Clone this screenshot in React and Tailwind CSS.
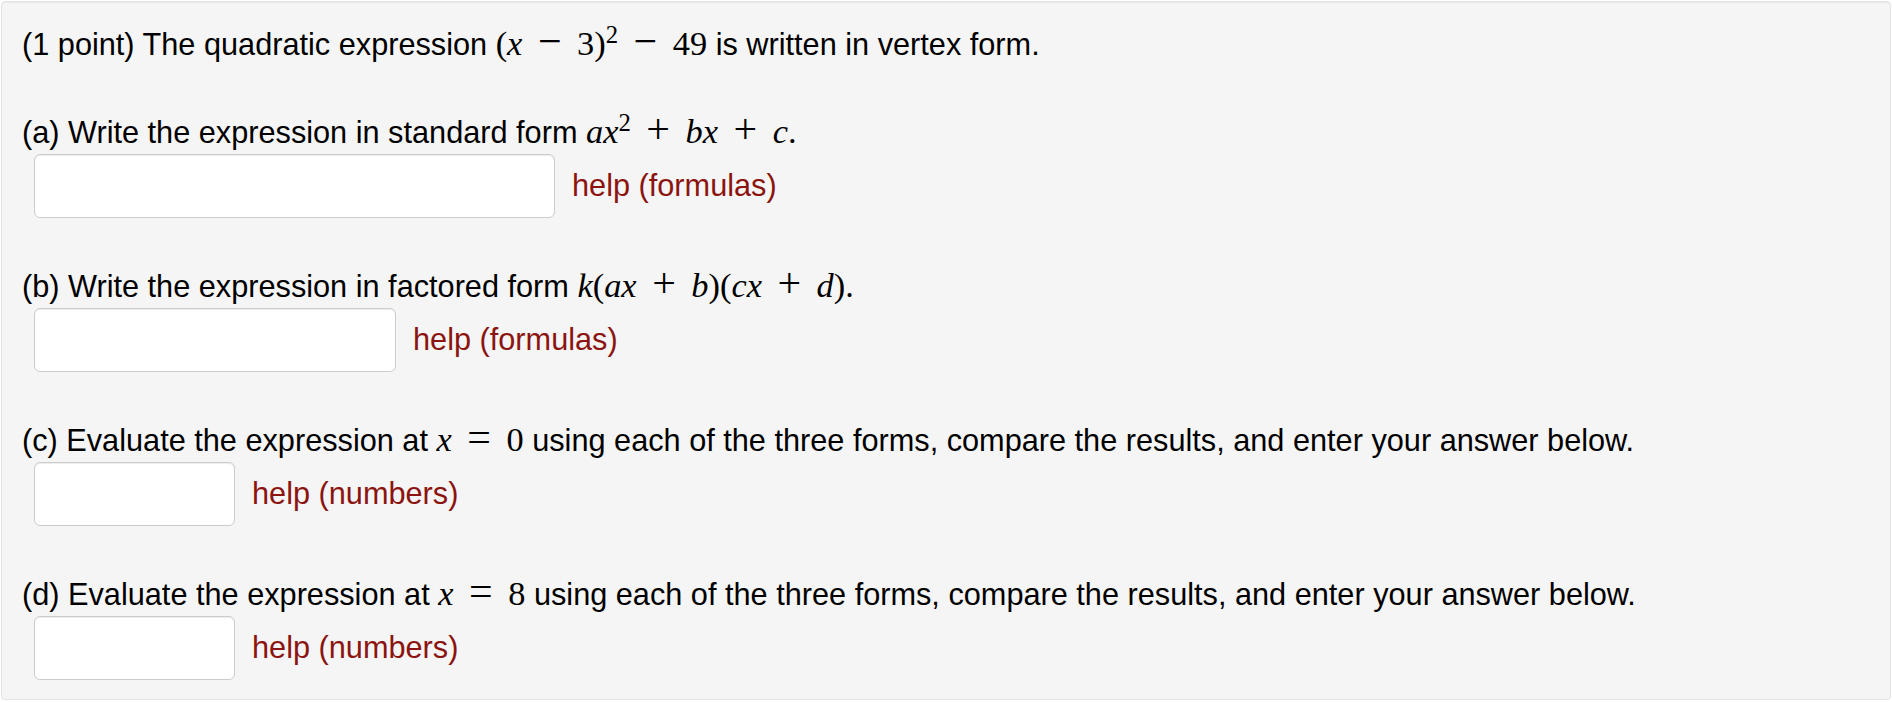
const textFont = { fontFamily: '"Liberation Sans", Arial, Helvetica, sans-serif' };

const M = ({ children }) => (
  <span className="font-['Liberation_Serif',serif] text-[1.12em] leading-[0]">{children}</span>
);
const V = ({ children }) => <i className="italic">{children}</i>;
const Op = ({ children }) => (
  <span className="mx-[0.37em] text-[1.22em] leading-[0]">{children}</span>
);
const Sup = ({ children }) => (
  <span className="relative -top-[0.5em] text-[0.72em] leading-[0]">{children}</span>
);

const Answer = ({ width, help }) => (
  <div className="flex items-center gap-[17px] pl-[12px]">
    <input
      type="text"
      className="h-[64px] rounded-[6px] border border-[#cccccc] bg-white shadow-[inset_0_1px_1px_rgba(0,0,0,0.075)] outline-none"
      style={{ width }}
    />
    <a className="text-[#8b1410] cursor-pointer">{help}</a>
  </div>
);

export default function App() {
  return (
    <div className="min-h-screen bg-white p-[1px]">
      <div
        className="rounded-[4px] border border-[#e3e3e3] bg-[#f5f5f5] px-[20px] pt-[22px] pb-[19px] text-[30.7px] leading-[42px] text-black shadow-[inset_0_1px_1px_rgba(0,0,0,0.05)]"
        style={textFont}
      >
        <p>
          (1 point) The quadratic expression{' '}
          <M>
            (<V>x</V>
            <Op>−</Op>3)<Sup>2</Sup>
            <Op>−</Op>49
          </M>{' '}
          is written in vertex form.
        </p>

        <div className="mt-[46px]">
          <p>
            (a) Write the expression in standard form{' '}
            <M>
              <V>ax</V>
              <Sup>2</Sup>
              <Op>+</Op>
              <V>bx</V>
              <Op>+</Op>
              <V>c</V>.
            </M>
          </p>
          <Answer width="521px" help="help (formulas)" />
        </div>

        <div className="mt-[48px]">
          <p>
            (b) Write the expression in factored form{' '}
            <M>
              <V>k</V>(<V>ax</V>
              <Op>+</Op>
              <V>b</V>)(<V>cx</V>
              <Op>+</Op>
              <V>d</V>).
            </M>
          </p>
          <Answer width="362px" help="help (formulas)" />
        </div>

        <div className="mt-[48px]">
          <p>
            (c) Evaluate the expression at{' '}
            <M>
              <V>x</V>
              <Op>=</Op>0
            </M>{' '}
            using each of the three forms, compare the results, and enter your answer below.
          </p>
          <Answer width="201px" help="help (numbers)" />
        </div>

        <div className="mt-[48px]">
          <p>
            (d) Evaluate the expression at{' '}
            <M>
              <V>x</V>
              <Op>=</Op>8
            </M>{' '}
            using each of the three forms, compare the results, and enter your answer below.
          </p>
          <Answer width="201px" help="help (numbers)" />
        </div>
      </div>
    </div>
  );
}
